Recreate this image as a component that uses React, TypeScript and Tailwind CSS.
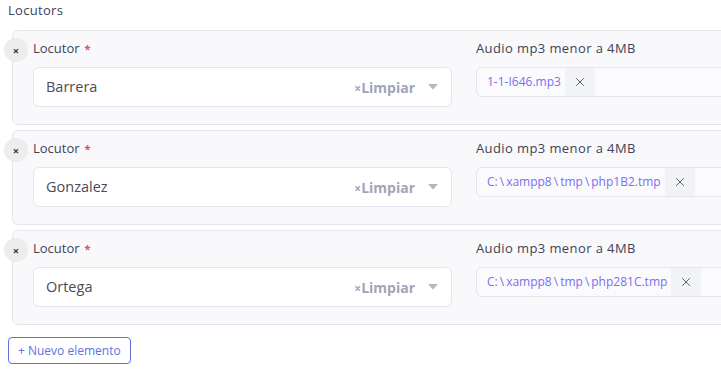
import React from 'react';

const rows = [
  { name: 'Barrera', file: '1-1-I646.mp3' },
  { name: 'Gonzalez', file: 'C:\\xampp8\\tmp\\php1B2.tmp' },
  { name: 'Ortega', file: 'C:\\xampp8\\tmp\\php281C.tmp' },
];

function FileName({ file }: { file: string }) {
  const parts = file.split('\\');
  return (
    <>
      {parts.map((p, i) => (
        <React.Fragment key={i}>
          {i > 0 && <span className="px-[2px]">\</span>}
          {p}
        </React.Fragment>
      ))}
    </>
  );
}

function Row({ name, file }: { name: string; file: string }) {
  return (
    <div className="relative ml-1 w-[904px] rounded-md border border-[#e4e6ef] bg-[#f9f9fc] px-5 pt-[8px] pb-[17px]">
      {/* Remove button */}
      <button className="absolute -left-[9px] top-[7px] flex h-6 w-6 items-center justify-center rounded-full bg-[#ededed] text-[11px] font-bold leading-none text-[#333]">
        ×
      </button>

      <div className="flex gap-6">
        <div className="w-[419px]">
          <div className="flex h-5 items-center text-[13px] font-medium text-[#3f4254]">
            Locutor<span className="ml-[5px] text-[11px] font-bold text-[#f1416c]">*</span>
          </div>
          <div className="mt-2 flex h-10 items-center rounded-md border border-[#e4e6ef] bg-white pl-[12px] pr-[13px]">
            <span className="flex-1 text-[14.5px] text-[#4b4b55]">{name}</span>
            <span className="text-[14px] font-bold text-[#a1a5b7]">
              <span className="text-[12px]">×</span>Limpiar
            </span>
            <svg className="ml-[13px]" width="10" height="6" viewBox="0 0 10 6">
              <path d="M0 0h10L5 5.5z" fill="#b5b5c3" />
            </svg>
          </div>
        </div>

        <div className="w-[419px]">
          <div className="flex h-5 items-center text-[13px] font-medium tracking-[0.4px] text-[#3f4254]">
            Audio mp3 menor a 4MB
          </div>
          <div className="mt-2 flex h-[30px] items-stretch overflow-hidden rounded-md border border-[#e4e6ef] bg-[#fbfbfe]">
            <span className="flex items-center pl-[10px] pr-[4px] text-[12px] text-[#7a6ff0]">
              <FileName file={file} />
            </span>
            <span className="flex w-[30px] items-center justify-center bg-[#f1f3f7]">
              <svg width="8" height="8" viewBox="0 0 8 8">
                <path d="M0.5 0.5l7 7M7.5 0.5l-7 7" stroke="#5e6278" strokeWidth="1" strokeLinecap="round" />
              </svg>
            </span>
          </div>
        </div>
      </div>
    </div>
  );
}

export default function App() {
  return (
    <div
      className="h-[387px] w-[721px] overflow-hidden bg-white px-2 pt-[1px]"
      style={{ fontFamily: '"Open Sans", "Noto Sans", sans-serif' }}
    >
      <div className="flex h-5 items-center text-[13px] font-medium tracking-[0.3px] text-[#3f4254]">Locutors</div>
      <div className="mt-[9px] flex flex-col gap-[5px]">
        {rows.map((r) => (
          <Row key={r.name} {...r} />
        ))}
      </div>
      <button className="mt-[12px] flex h-[27px] items-center rounded-[4px] border border-[#5d6fe0] px-[9px] text-[12px] text-[#6172e3]">
        + Nuevo elemento
      </button>
    </div>
  );
}
